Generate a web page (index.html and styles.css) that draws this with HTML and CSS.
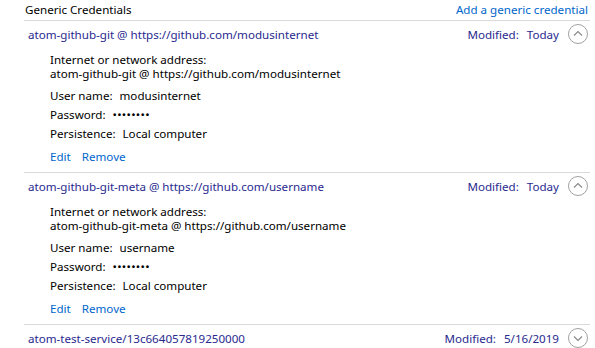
FILE: index.html
```html
<!DOCTYPE html>
<html>
<head>
<meta charset="utf-8">
<link rel="stylesheet" href="styles.css">
</head>
<body>
<div class="page">
  <div class="top">
    <span class="title">Generic Credentials</span>
    <a class="link add">Add a generic credential</a>
  </div>

  <div class="cred">
    <div class="head">
      <span class="name">atom-github-git @ https://github.com/modusinternet</span>
      <span class="mod">Modified:<span class="val">Today</span></span>
      <svg class="chev" width="20" height="20" viewBox="0 0 20 20"><circle cx="10" cy="10" r="9.5" fill="none" stroke="#a0a0a0"/><path d="M6 11.5 L10 7.5 L14 11.5" fill="none" stroke="#8a8a8a" stroke-width="1.2"/></svg>
    </div>
    <div class="details">
      <div class="addr">Internet or network address:<br>atom-github-git @ https://github.com/modusinternet</div>
      <div class="field">User name:<span class="val">modusinternet</span></div>
      <div class="field">Password:<span class="val dots">••••••••</span></div>
      <div class="field">Persistence:<span class="val">Local computer</span></div>
      <div class="actions"><a class="link">Edit</a><a class="link">Remove</a></div>
    </div>
  </div>

  <div class="cred">
    <div class="head">
      <span class="name">atom-github-git-meta @ https://github.com/username</span>
      <span class="mod">Modified:<span class="val">Today</span></span>
      <svg class="chev" width="20" height="20" viewBox="0 0 20 20"><circle cx="10" cy="10" r="9.5" fill="none" stroke="#a0a0a0"/><path d="M6 11.5 L10 7.5 L14 11.5" fill="none" stroke="#8a8a8a" stroke-width="1.2"/></svg>
    </div>
    <div class="details">
      <div class="addr">Internet or network address:<br>atom-github-git-meta @ https://github.com/username</div>
      <div class="field">User name:<span class="val">username</span></div>
      <div class="field">Password:<span class="val dots">••••••••</span></div>
      <div class="field">Persistence:<span class="val">Local computer</span></div>
      <div class="actions"><a class="link">Edit</a><a class="link">Remove</a></div>
    </div>
  </div>

  <div class="cred collapsed">
    <div class="head">
      <span class="name">atom-test-service/13c664057819250000</span>
      <span class="mod">Modified:<span class="val">5/16/2019</span></span>
      <svg class="chev" width="20" height="20" viewBox="0 0 20 20"><circle cx="10" cy="10" r="9.5" fill="none" stroke="#a0a0a0"/><path d="M6 8.5 L10 12.5 L14 8.5" fill="none" stroke="#8a8a8a" stroke-width="1.2"/></svg>
    </div>
  </div>
</div>
</body>
</html>
```

FILE: styles.css
```css
html, body {
  margin: 0;
  padding: 0;
  background: #ffffff;
}
body {
  font-family: "Noto Sans", "Open Sans", sans-serif;
  font-size: 11.6px;
  color: #000000;
  overflow: hidden;
}
.page {
  margin-left: 24px;
  margin-right: 5px;
}
.top {
  display: flex;
  justify-content: space-between;
  align-items: center;
  height: 20px;
  padding: 0 2px 0 1px;
  border-bottom: 1px solid #d9d9d9;
  line-height: 18px;
}
.link {
  color: #0066cc;
  cursor: pointer;
}
.cred {
  border-bottom: 1px solid #d9d9d9;
}
.head {
  display: flex;
  align-items: center;
  height: 24px;
  padding: 1px 2px 0 4px;
  color: #29298f;
}
.name {
  flex: 1;
}
.mod .val {
  margin-left: 8px;
}
.chev {
  margin-left: 9px;
  display: block;
}
.details {
  padding: 7px 0 6px 26px;
}
.addr {
  line-height: 14px;
}
.field {
  margin-top: 8px;
  line-height: 13px;
  height: 13px;
}
.field + .field {
  margin-top: 6px;
}
.field .val {
  margin-left: 7px;
}
.dots {
  letter-spacing: 0.3px;
}
.actions {
  margin-top: 7px;
  line-height: 19px;
  display: flex;
  gap: 11px;
}
```
